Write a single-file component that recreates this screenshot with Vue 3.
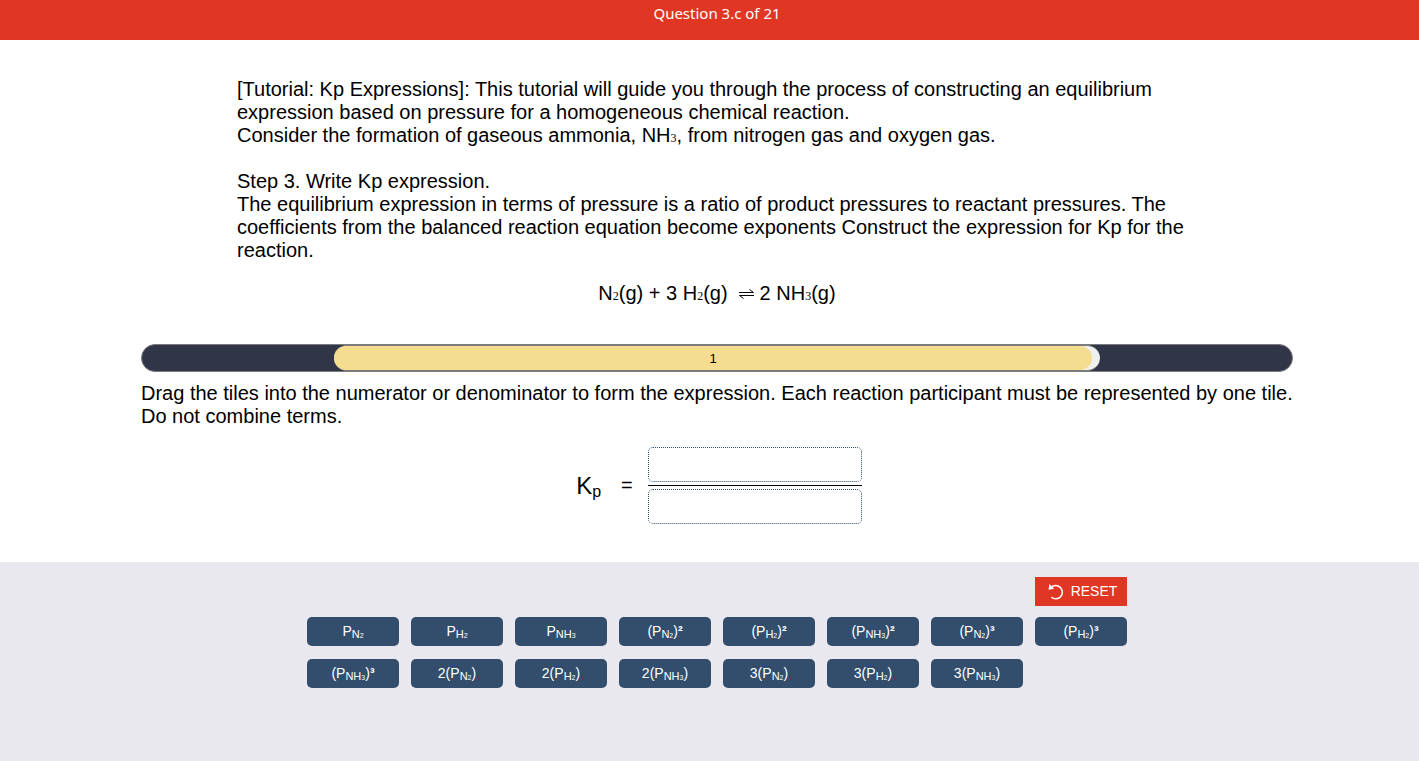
<script setup>
const tiles = [
  { before: '', species: 'N', count: 2, after: '' },
  { before: '', species: 'H', count: 2, after: '' },
  { before: '', species: 'NH', count: 3, after: '' },
  { before: '(', species: 'N', count: 2, after: ')', power: '²' },
  { before: '(', species: 'H', count: 2, after: ')', power: '²' },
  { before: '(', species: 'NH', count: 3, after: ')', power: '²' },
  { before: '(', species: 'N', count: 2, after: ')', power: '³' },
  { before: '(', species: 'H', count: 2, after: ')', power: '³' },
  { before: '(', species: 'NH', count: 3, after: ')', power: '³' },
  { before: '2(', species: 'N', count: 2, after: ')' },
  { before: '2(', species: 'H', count: 2, after: ')' },
  { before: '2(', species: 'NH', count: 3, after: ')' },
  { before: '3(', species: 'N', count: 2, after: ')' },
  { before: '3(', species: 'H', count: 2, after: ')' },
  { before: '3(', species: 'NH', count: 3, after: ')' }
]
</script>

<template>
  <div class="page">
    <header class="topbar">Question 3.c of 21</header>

    <main class="content">
      <section class="prompt">
        <p>
          [Tutorial: Kp Expressions]: This tutorial will guide you through the process of constructing an equilibrium
          expression based on pressure for a homogeneous chemical reaction.<br />
          Consider the formation of gaseous ammonia, NH<span class="low">3</span>, from nitrogen gas and oxygen gas.
        </p>
        <p>
          Step 3. Write Kp expression.<br />
          The equilibrium expression in terms of pressure is a ratio of product pressures to reactant pressures. The
          coefficients from the balanced reaction equation become exponents Construct the expression for Kp for the
          reaction.
        </p>
        <div class="equation">
          <span>N<span class="low">2</span>(g) + 3 H<span class="low">2</span>(g)</span>
          <svg class="arrows" viewBox="0 0 15 10" role="img" aria-label="is in equilibrium with">
            <path d="M0 3.5H14.5L10.5 0.5M15 6.5H0.5L4.5 9.5" />
          </svg>
          <span>2 NH<span class="low">3</span>(g)</span>
        </div>
      </section>

      <div class="track">
        <div class="thumb"><div class="fill">1</div></div>
      </div>

      <p class="instruction">
        Drag the tiles into the numerator or denominator to form the expression. Each reaction participant must be
        represented by one tile. Do not combine terms.
      </p>

      <div class="expression">
        <span class="symbol">K<sub>p</sub></span>
        <span class="equals">=</span>
        <div class="fraction">
          <div class="slot" role="group" aria-label="Numerator"></div>
          <div class="rule"></div>
          <div class="slot" role="group" aria-label="Denominator"></div>
        </div>
      </div>
    </main>

    <section class="tray">
      <div class="grid">
        <button class="reset" type="button">
          <svg viewBox="0 0 16 16" aria-hidden="true">
            <path class="arc" d="M3 3.6A6.6 6.6 0 1 1 3.4 13.2" />
            <path class="head" d="M1.4 0L0.5 5.8L6.2 4.8Z" />
          </svg>
          RESET
        </button>
        <button v-for="(tile, index) in tiles" :key="index" class="tile" type="button">
          <span>{{ tile.before }}P<sub>{{ tile.species }}<small>{{ tile.count }}</small></sub>{{ tile.after }}<b v-if="tile.power">{{ tile.power }}</b></span>
        </button>
      </div>
    </section>
  </div>
</template>

<style>
body {
  margin: 0;
}
</style>

<style scoped>
.page {
  display: flex;
  flex-direction: column;
  min-height: 100vh;
  background: #fff;
  color: #000;
  font: 20px/23px "Liberation Sans", Arial, sans-serif;
}
.topbar {
  box-sizing: border-box;
  height: 40px;
  padding: 1px 0 0 15px;
  background: #df3724;
  color: #fff;
  font: 15px/24px "Noto Sans", "Open Sans", sans-serif;
  text-align: center;
}
.content {
  display: flex;
  flex-direction: column;
  align-items: center;
  padding: 38px 0 38px 15px;
}
.prompt {
  width: 80%;
  max-width: 960px;
}
p {
  margin: 0 0 23px;
}
.low {
  font: 12px/12px "Liberation Serif", serif;
}
.equation {
  display: flex;
  justify-content: center;
  align-items: center;
  margin-top: -3px;
}
.arrows {
  width: 15px;
  height: 10px;
  margin: 0 6px 0 11px;
  fill: none;
  stroke: #000;
}
.track {
  display: flex;
  box-sizing: border-box;
  width: 90%;
  max-width: 1152px;
  height: 28px;
  margin-top: 39px;
  padding-left: 192px;
  border: 1px solid #7c7c7f;
  border-radius: 14px;
  background: #303648;
}
.thumb {
  box-sizing: border-box;
  width: 80%;
  max-width: 766px;
  height: 26px;
  padding-right: 8px;
  border-top: 1px solid #7c7c7f;
  border-bottom: 1px solid #7c7c7f;
  border-radius: 13px;
  background: #f0f0f0;
}
.fill {
  height: 24px;
  border-radius: 12px;
  background: #f5dd8f;
  font-size: 13px;
  line-height: 26px;
  text-align: center;
}
.instruction {
  box-sizing: border-box;
  width: 90%;
  max-width: 1160px;
  margin: 10px 0 19px;
  padding-left: 4px;
}
.expression {
  display: flex;
  align-items: center;
  padding-left: 4px;
}
.symbol {
  font-size: 24px;
  line-height: 28px;
}
.symbol sub {
  font-size: 16px;
  line-height: 0;
  vertical-align: -3px;
}
.equals {
  margin: 0 15px 0 20px;
}
.fraction {
  display: grid;
  width: 214px;
  gap: 3px;
}
.slot {
  box-sizing: border-box;
  height: 35px;
  border: 1px dotted #334e6d;
  border-radius: 5px;
}
.rule {
  height: 1px;
  background: #000;
}
.tray {
  flex: 1;
  padding: 15px 0 15px 15px;
  background: #e9e8ee;
}
.grid {
  display: grid;
  grid-template-columns: repeat(8, 92px);
  justify-content: center;
  gap: 13px 12px;
}
button {
  height: 29px;
  padding: 0;
  border: 0;
  color: #fff;
  font: 14px/29px "Liberation Sans", Arial, sans-serif;
}
.reset {
  display: flex;
  grid-column: 8;
  align-items: center;
  justify-content: center;
  gap: 7px;
  margin-bottom: -2px;
  padding-left: 3px;
  background: #df3724;
}
.reset svg {
  width: 16px;
  height: 16px;
}
.arc {
  fill: none;
  stroke: #fff;
  stroke-width: 1.5;
}
.head {
  fill: #fff;
}
.tile {
  border-radius: 5px;
  background: #334e6d;
}
.tile sub {
  font-size: 11px;
  line-height: 0;
  vertical-align: -2px;
}
.tile small {
  font-size: 7px;
}
.tile b {
  font-weight: 700;
}
</style>
